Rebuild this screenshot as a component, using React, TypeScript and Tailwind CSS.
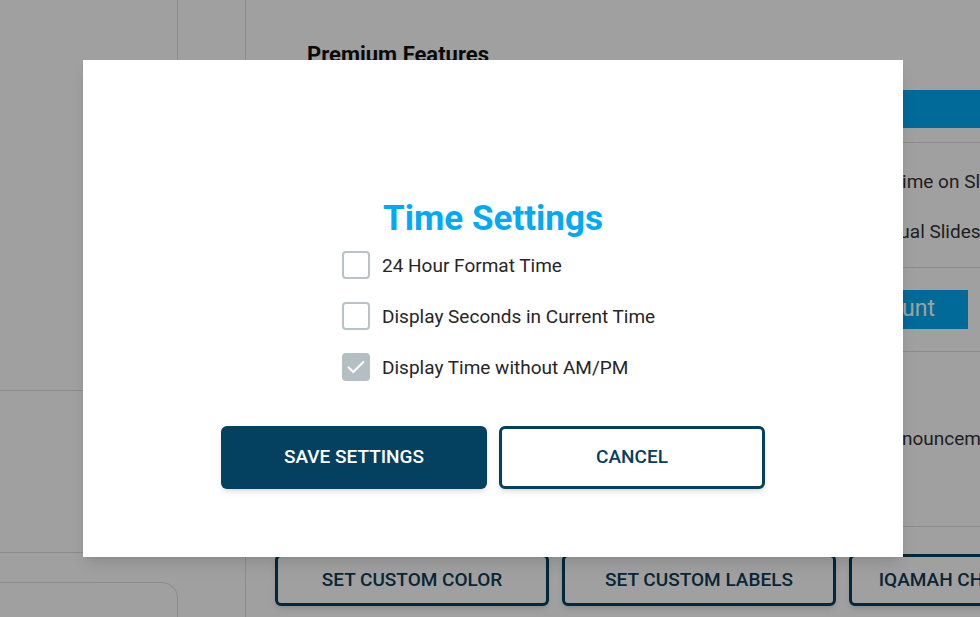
import { useState } from "react";

const Checkbox = ({ checked, label, onToggle }: { checked: boolean; label: string; onToggle: () => void }) => (
  <label className="flex items-center gap-3 cursor-pointer select-none" onClick={onToggle}>
    <span
      className={
        checked
          ? "flex items-center justify-center size-[28px] rounded-[4px] bg-[#b3bfc3]"
          : "flex items-center justify-center size-[28px] rounded-[4px] border-2 border-[#b8c3c7] bg-white"
      }
    >
      {checked && (
        <svg width="22" height="22" viewBox="0 0 24 24" fill="none" stroke="white" strokeWidth="2.4" strokeLinecap="round" strokeLinejoin="round">
          <path d="M4 12.5l5 5L20 6.5" />
        </svg>
      )}
    </span>
    <span className="text-[19px] text-[#262626] leading-none">{label}</span>
  </label>
);

const TimeSettingsModal = () => {
  const [opts, setOpts] = useState({ h24: false, seconds: false, noAmPm: true });

  return (
    <div className="absolute inset-0 flex items-center justify-center pl-[6px] bg-black/[0.373]">
      <div className="w-[820px] h-[497px] bg-white shadow-lg flex flex-col items-center pt-[139px]">
        <h2 className="text-[35px] leading-[40px] font-bold text-[#03a9f4]">Time Settings</h2>
        <div className="mt-[12px] self-start ml-[259px] flex flex-col gap-[23px]">
          <Checkbox checked={opts.h24} label="24 Hour Format Time" onToggle={() => setOpts({ ...opts, h24: !opts.h24 })} />
          <Checkbox checked={opts.seconds} label="Display Seconds in Current Time" onToggle={() => setOpts({ ...opts, seconds: !opts.seconds })} />
          <Checkbox checked={opts.noAmPm} label="Display Time without AM/PM" onToggle={() => setOpts({ ...opts, noAmPm: !opts.noAmPm })} />
        </div>
        <div className="mt-[45px] flex gap-3">
          <button className="w-[266px] h-[63px] rounded-[6px] bg-[#04405f] text-white text-[19px] font-medium uppercase shadow-md">
            Save Settings
          </button>
          <button className="w-[266px] h-[63px] rounded-[6px] border-[3px] border-[#04405f] bg-white text-[#04405f] text-[19px] font-medium uppercase shadow-md">
            Cancel
          </button>
        </div>
      </div>
    </div>
  );
};

const OptionRow = ({ label }: { label: string }) => (
  <div className="flex items-center gap-[10px] h-[50px]">
    <span className="size-5 rounded-[3px] border-2 border-[#c4c4c4]" />
    <span className="text-[19px] text-[#333] whitespace-nowrap">{label}</span>
  </div>
);

export default function App() {
  return (
    <div className="relative h-[617px] w-full overflow-hidden bg-white font-['Roboto',sans-serif]">
      <div className="flex h-full">
        {/* sidebar */}
        <aside className="w-[178px] shrink-0 flex flex-col">
          <div className="h-[391px] border-r border-b border-[#e0e0e0]" />
          <div className="h-[162px] border-b border-[#e0e0e0]" />
          <div className="mt-[29px] -ml-4 flex-1 rounded-tr-2xl border-t border-r border-[#e0e0e0]" />
        </aside>
        <div className="w-[68px] shrink-0 border-r border-[#e0e0e0]" />

        {/* main settings panel */}
        <main className="flex-1 min-w-0 overflow-hidden">
          <div className="w-[860px] pl-[29px]">
            <h1 className="mt-[41px] ml-[32px] text-[22px] leading-[27px] font-bold text-[#111]">Premium Features</h1>
            <div className="mt-[22px] ml-[32px] h-[38px] bg-[#03a9f4] flex items-center px-4 text-white text-[18px]">
              Upgrade to Premium
            </div>
            <div className="mt-[14px] border-t border-[#e0e0e0]" />
            <div className="pt-[14px] grid grid-cols-[520px_1fr]">
              <div>
                <OptionRow label="Show Hijri Date" />
                <OptionRow label="Show Weather" />
              </div>
              <div>
                <OptionRow label="Display Time on Slides" />
                <OptionRow label="Use Manual Slides" />
              </div>
            </div>
            <div className="mt-[10px] border-t border-[#e0e0e0]" />
            <div className="h-[83px] flex items-center">
              <div className="ml-[500px] h-[39px] w-[193px] bg-[#03a9f4] flex items-center justify-end pr-[33px] text-white text-[23px]">
                Account
              </div>
            </div>
            <div className="border-t border-[#e0e0e0]" />
            <div className="h-[174px] flex items-center">
              <span className="ml-[604px] text-[19px] text-[#333]">Announcements</span>
            </div>
            <div className="border-t border-[#e0e0e0]" />
            <div className="mt-[27px] flex gap-[13px]">
              {["Set Custom Color", "Set Custom Labels", "Iqamah Change Times"].map((t) => (
                <button
                  key={t}
                  className="w-[274px] shrink-0 h-[52px] rounded-[6px] border-[3px] border-[#04405f] bg-white text-[#0d3d57] text-[19px] font-medium uppercase shadow-md"
                >
                  {t}
                </button>
              ))}
            </div>
          </div>
        </main>
      </div>
      <TimeSettingsModal />
    </div>
  );
}
